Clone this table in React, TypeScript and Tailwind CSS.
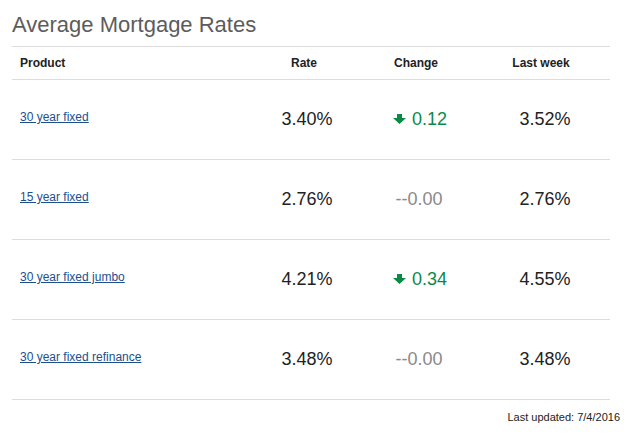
const rows = [
  { name: "30 year fixed", rate: "3.40%", change: "0.12", down: true, last: "3.52%" },
  { name: "15 year fixed", rate: "2.76%", change: "--0.00", down: false, last: "2.76%" },
  { name: "30 year fixed jumbo", rate: "4.21%", change: "0.34", down: true, last: "4.55%" },
  { name: "30 year fixed refinance", rate: "3.48%", change: "--0.00", down: false, last: "3.48%" },
];

function DownArrow() {
  return (
    <svg width="13" height="10" viewBox="0 0 13 10" className="mr-[6px] mb-[1px]">
      <path d="M4 0h5v4h4l-6.5 6L0 4h4z" fill="#0b8a47" />
    </svg>
  );
}

export default function App() {
  return (
    <div className="w-[630px] h-[436px] bg-white px-3 pt-[11px] font-['Liberation_Sans',Arial,sans-serif]">
      <h1 className="text-[22px] leading-[28px] text-[#5c5c5c] pb-[7px] border-b border-[#dcdcdc] w-[598px]">
        Average Mortgage Rates
      </h1>
      <div className="w-[598px]">
        <div className="grid grid-cols-[236px_112px_112px_138px] h-[33px] items-center border-b border-[#dcdcdc] text-[12px] font-bold text-[#222]">
          <div className="pl-2">Product</div>
          <div className="text-center">Rate</div>
          <div className="text-center">Change</div>
          <div className="text-center">Last week</div>
        </div>
        {rows.map((r) => (
          <div
            key={r.name}
            className="grid grid-cols-[236px_112px_112px_138px] h-[80px] items-center border-b border-[#dcdcdc]"
          >
            <div className="pl-2 pb-[7px]">
              <a href="#" className="text-[12px] text-[#1d4f8f] underline">
                {r.name}
              </a>
            </div>
            <div className="text-center text-[18px] text-[#222] pl-[6px]">{r.rate}</div>
            <div
              className={
                r.down
                  ? "flex items-center justify-center text-[18px] text-[#0b8a47] pl-2"
                  : "flex items-center justify-center text-[18px] text-[#8a8a8a] pl-[6px]"
              }
            >
              {r.down && <DownArrow />}
              {r.change}
            </div>
            <div className="text-center text-[18px] text-[#222] pl-[8px]">{r.last}</div>
          </div>
        ))}
      </div>
      <div className="w-[608px] text-right text-[11px] text-[#222] pt-[9px]">Last updated: 7/4/2016</div>
    </div>
  );
}
